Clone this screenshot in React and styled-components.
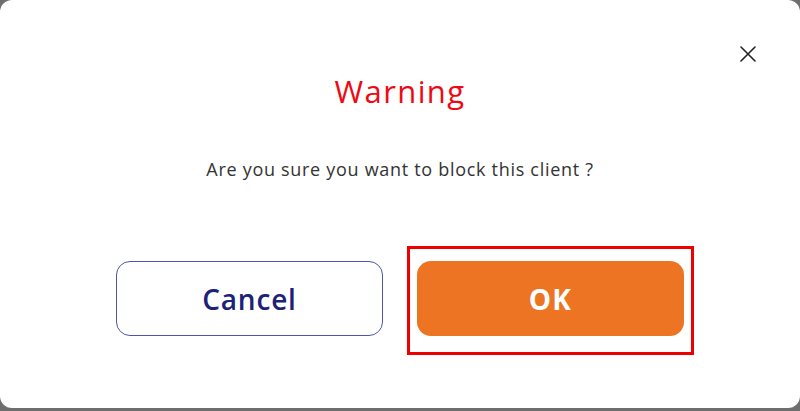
import React from 'react';
import styled, { createGlobalStyle } from 'styled-components';

const Global = createGlobalStyle`
  html, body {
    margin: 0;
    padding: 0;
    background: #6e6e6e;
  }
  body {
    font-family: "Open Sans", "Noto Sans", sans-serif;
  }
`;

const Card = styled.div`
  width: 800px;
  height: 408px;
  box-sizing: border-box;
  background: #ffffff;
  border-radius: 12px;
  display: flex;
  flex-direction: column;
  align-items: center;
`;

const CloseRow = styled.div`
  align-self: stretch;
  display: flex;
  justify-content: flex-end;
  padding: 44px 42px 0 0;
`;

const CloseButton = styled.button`
  width: 20px;
  height: 20px;
  padding: 0;
  border: none;
  background: none;
  display: flex;
  align-items: center;
  justify-content: center;
  cursor: pointer;
`;

const Title = styled.h2`
  margin: 9px 0 0;
  font-size: 31px;
  line-height: 36px;
  font-weight: 500;
  letter-spacing: 1.4px;
  color: #ee0a14;
`;

const Message = styled.p`
  margin: 50px 0 0;
  font-size: 18px;
  line-height: 20px;
  letter-spacing: 0.7px;
  color: #333333;
`;

const Actions = styled.div`
  display: flex;
  gap: 34px;
  margin-top: 82px;
`;

const Button = styled.button`
  width: 267px;
  height: 75px;
  box-sizing: border-box;
  border-radius: 14px;
  font-family: inherit;
  font-size: 28px;
  font-weight: ${p => (p.$primary ? 700 : 600)};
  letter-spacing: ${p => (p.$primary ? '1.2px' : '0.8px')};
  cursor: pointer;
  border: ${p => (p.$primary ? 'none' : '1.5px solid #4c56a8')};
  background: ${p => (p.$primary ? '#ec7422' : '#ffffff')};
  color: ${p => (p.$primary ? '#ffffff' : '#1c2277')};
`;

const Focused = styled.span`
  position: relative;
  display: flex;
`;

const Highlight = styled.span`
  position: absolute;
  top: -15px;
  left: -10px;
  right: -10px;
  bottom: -19px;
  border: 3px solid #ee0000;
  pointer-events: none;
`;

export default function App() {
  return (
    <>
      <Global />
      <Card>
        <CloseRow>
          <CloseButton aria-label="Close">
            <svg width="16" height="16" viewBox="0 0 16 16">
              <path d="M1 1L15 15M15 1L1 15" stroke="#222" strokeWidth="1.6" strokeLinecap="round" />
            </svg>
          </CloseButton>
        </CloseRow>
        <Title>Warning</Title>
        <Message>Are you sure you want to block this client ?</Message>
        <Actions>
          <Button>Cancel</Button>
          <Focused>
            <Button $primary>OK</Button>
            <Highlight />
          </Focused>
        </Actions>
      </Card>
    </>
  );
}
